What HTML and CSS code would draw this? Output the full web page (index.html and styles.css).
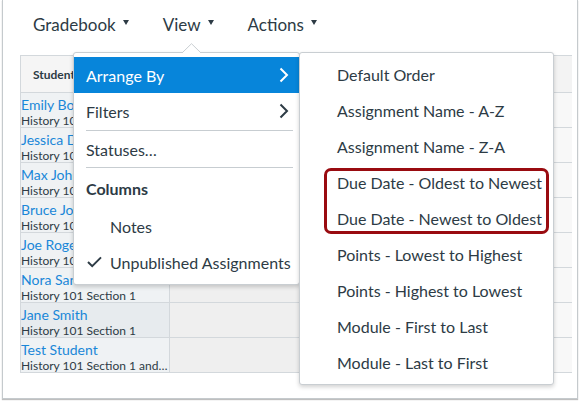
FILE: index.html
```html
<!DOCTYPE html>
<html>
<head>
<meta charset="utf-8">
<link rel="stylesheet" href="styles.css">
</head>
<body>
<div class="frame">
  <nav class="nav">
    <span class="nav-item nav-gradebook">Gradebook<i class="caret"></i></span>
    <span class="nav-item nav-view">View<i class="caret"></i></span>
    <span class="nav-item nav-actions">Actions<i class="caret"></i></span>
  </nav>

  <div class="grid">
    <div class="row head">
      <div class="cell student"><b>Student</b></div>
      <div class="cell grade"></div>
      <div class="cell grade2"></div>
    </div>
    <div class="row"><div class="cell student"><a>Emily Bowman</a><span>History 101 Section 1</span></div><div class="cell grade"></div><div class="cell grade2"></div></div>
    <div class="row"><div class="cell student"><a>Jessica Davis</a><span>History 101 Section 1</span></div><div class="cell grade"></div><div class="cell grade2"></div></div>
    <div class="row"><div class="cell student"><a>Max Johnson</a><span>History 101 Section 1</span></div><div class="cell grade"></div><div class="cell grade2"></div></div>
    <div class="row"><div class="cell student"><a>Bruce Jones</a><span>History 101 Section 1</span></div><div class="cell grade"></div><div class="cell grade2"></div></div>
    <div class="row"><div class="cell student"><a>Joe Rogers</a><span>History 101 Section 1</span></div><div class="cell grade"></div><div class="cell grade2"></div></div>
    <div class="row"><div class="cell student"><a>Nora Sanderson</a><span>History 101 Section 1</span></div><div class="cell grade"></div><div class="cell grade2"></div></div>
    <div class="row"><div class="cell student alt"><a>Jane Smith</a><span>History 101 Section 1</span></div><div class="cell grade"></div><div class="cell grade2"></div></div>
    <div class="row"><div class="cell student"><a>Test Student</a><span>History 101 Section 1 and Section 2</span></div><div class="cell grade"></div><div class="cell grade2"></div></div>
  </div>

  <div class="menu view-menu">
    <svg class="pointer" width="19" height="10" viewBox="0 0 19 10"><path d="M0 10 L9.5 0.7 L19 10" fill="#fff" stroke="#c9ced2" stroke-width="1"/></svg>
    <div class="item active">Arrange By
      <svg class="chev" width="10" height="16" viewBox="0 0 10 16"><path d="M1.5 1.5 L8 8 L1.5 14.5" fill="none" stroke="#fff" stroke-width="2"/></svg>
    </div>
    <div class="item filters">Filters
      <svg class="chev" width="10" height="16" viewBox="0 0 10 16"><path d="M1.5 1.5 L8 8 L1.5 14.5" fill="none" stroke="#2d3b45" stroke-width="2"/></svg>
    </div>
    <div class="sep"></div>
    <div class="item">Statuses…</div>
    <div class="sep"></div>
    <div class="item group">Columns</div>
    <div class="item sub">Notes</div>
    <div class="item sub checked">
      <svg class="check" width="15" height="12" viewBox="0 0 15 12"><path d="M1 6 L5.2 10.2 L14 1.4" fill="none" stroke="#2d3b45" stroke-width="2"/></svg>
      Unpublished Assignments</div>
  </div>

  <div class="menu arrange-menu">
    <div class="item">Default Order</div>
    <div class="item">Assignment Name - A-Z</div>
    <div class="item">Assignment Name - Z-A</div>
    <div class="item">Due Date - Oldest to Newest</div>
    <div class="item">Due Date - Newest to Oldest</div>
    <div class="item">Points - Lowest to Highest</div>
    <div class="item">Points - Highest to Lowest</div>
    <div class="item">Module - First to Last</div>
    <div class="item">Module - Last to First</div>
    <div class="highlight"></div>
  </div>
</div>
</body>
</html>
```

FILE: styles.css
```css
html, body {
  margin: 0;
  padding: 0;
  background: #fff;
}
body {
  font-family: Lato, "Noto Sans", sans-serif;
  color: #2d3b45;
  width: 579px;
  height: 402px;
  overflow: hidden;
}
.frame {
  position: relative;
  margin-left: 2px;
  width: 574px;
  height: 398px;
  border: 1px solid #c5cacd;
  border-top: none;
  box-shadow: 0 1px 1px rgba(0,0,0,0.25);
  box-sizing: content-box;
}
.nav {
  height: 55px;
  display: flex;
  align-items: flex-start;
  padding-left: 30px;
  padding-top: 14px;
  box-sizing: border-box;
  font-size: 17px;
  line-height: 22px;
}
.nav-item {
  display: inline-flex;
  align-items: center;
  gap: 7px;
}
.nav-gradebook { margin-right: 34px; }
.nav-view { margin-right: 34px; }
.caret {
  display: inline-block;
  width: 0;
  height: 0;
  border-left: 3.5px solid transparent;
  border-right: 3.5px solid transparent;
  border-top: 5px solid #2d3b45;
  margin-top: -5px;
}
.grid {
  margin-left: 17px;
  width: 552px;
  border-top: 1px solid #d3d8dc;
}
.row {
  display: flex;
  height: 35px;
  border-bottom: 1px solid #d3d8dc;
  box-sizing: border-box;
}
.row.head {
  height: 37px;
  background: #f5f5f5;
}
.cell {
  box-sizing: border-box;
}
.student {
  width: 150px;
  border-right: 1px solid #d3d8dc;
  border-left: 1px solid #d3d8dc;
  background: #eff2f4;
  padding: 4px 1px 0 0;
  display: flex;
  flex-direction: column;
  overflow: hidden;
  white-space: nowrap;
}
.head .student {
  background: #f5f5f5;
  padding: 0 0 0 12px;
  justify-content: center;
  font-size: 12px;
}
.student.alt { background: #e7ebee; }
.student a {
  color: #1a87d8;
  font-size: 14px;
  line-height: 16px;
}
.student span {
  font-size: 12px;
  line-height: 15px;
  overflow: hidden;
  text-overflow: ellipsis;
}
.grade {
  width: 160px;
  background: #efefef;
  border-right: 1px solid #d3d8dc;
}
.head .grade { background: #f5f5f5; }
.grade2 {
  flex: 1;
  background: #f8f8f8;
}
.head .grade2 { background: #f3f3f3; }

.menu {
  position: absolute;
  top: 52px;
  background: #fff;
  border: 1px solid #c9ced2;
  border-radius: 3px;
  box-shadow: 0 2px 4px rgba(0,0,0,0.18);
  box-sizing: border-box;
  font-size: 16px;
}
.view-menu {
  left: 70px;
  width: 227px;
  height: 233px;
  padding-top: 4px;
}
.pointer {
  position: absolute;
  left: 108px;
  top: -10px;
}
.view-menu .item {
  height: 36px;
  display: flex;
  align-items: center;
  padding-left: 12px;
  position: relative;
  white-space: nowrap;
}
.view-menu .item.active {
  background: #0785da;
  color: #fff;
}
.view-menu .item.filters { height: 37px; }
.chev {
  position: absolute;
  right: 10px;
  top: 10px;
}
.sep {
  height: 1px;
  background: #c7cdd1;
  margin: 0 6px 0 12px;
}
.item.group {
  font-weight: bold;
  height: 40px;
}
.view-menu .item.sub {
  padding-left: 36px;
}
.check {
  position: absolute;
  left: 13px;
  top: 12px;
}
.arrange-menu {
  left: 296px;
  width: 255px;
  height: 333px;
  padding-top: 3px;
}
.arrange-menu .item {
  height: 36px;
  display: flex;
  align-items: center;
  padding-left: 37px;
  white-space: nowrap;
}
.highlight {
  position: absolute;
  left: 24px;
  top: 115px;
  width: 225px;
  height: 66px;
  border: 3px solid #990b10;
  border-radius: 7px;
  box-sizing: border-box;
}
```
